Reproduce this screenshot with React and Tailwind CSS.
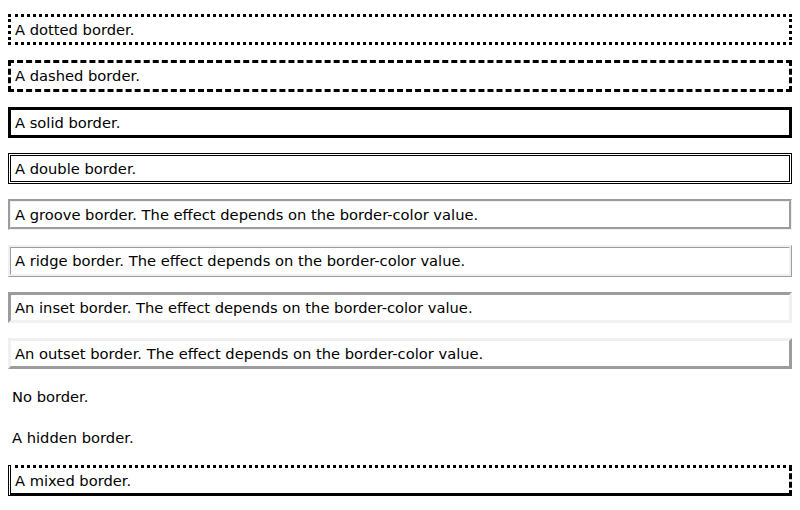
export default function App() {
  const base = "px-[4px] py-[4px] leading-[17.3px] border-[3px] border-black";
  const fx = "px-[4px] py-[4px] leading-[17.3px] border-[3px] border-[#f0f0f0]";
  return (
    <div className="flex flex-col gap-[15px] pt-[14px] px-2 bg-white text-black text-[14.7px]" style={{ fontFamily: "'DejaVu Sans', sans-serif" }}>
      <p className={`${base} border-dotted`}>A dotted border.</p>
      <p className={`${base} border-dashed`}>A dashed border.</p>
      <p className={`${base} border-solid`}>A solid border.</p>
      <p className={`${base} border-double`}>A double border.</p>
      <p className={`${fx} [border-style:groove]`}>A groove border. The effect depends on the border-color value.</p>
      <p className={`${fx} [border-style:ridge]`}>A ridge border. The effect depends on the border-color value.</p>
      <p className={`${fx} [border-style:inset]`}>An inset border. The effect depends on the border-color value.</p>
      <p className={`${fx} [border-style:outset]`}>An outset border. The effect depends on the border-color value.</p>
      <p className={`${base} border-none`}>No border.</p>
      <p className={`${base} border-hidden`}>A hidden border.</p>
      <p className={`${base} [border-style:dotted_dashed_solid_double]`}>A mixed border.</p>
    </div>
  );
}
